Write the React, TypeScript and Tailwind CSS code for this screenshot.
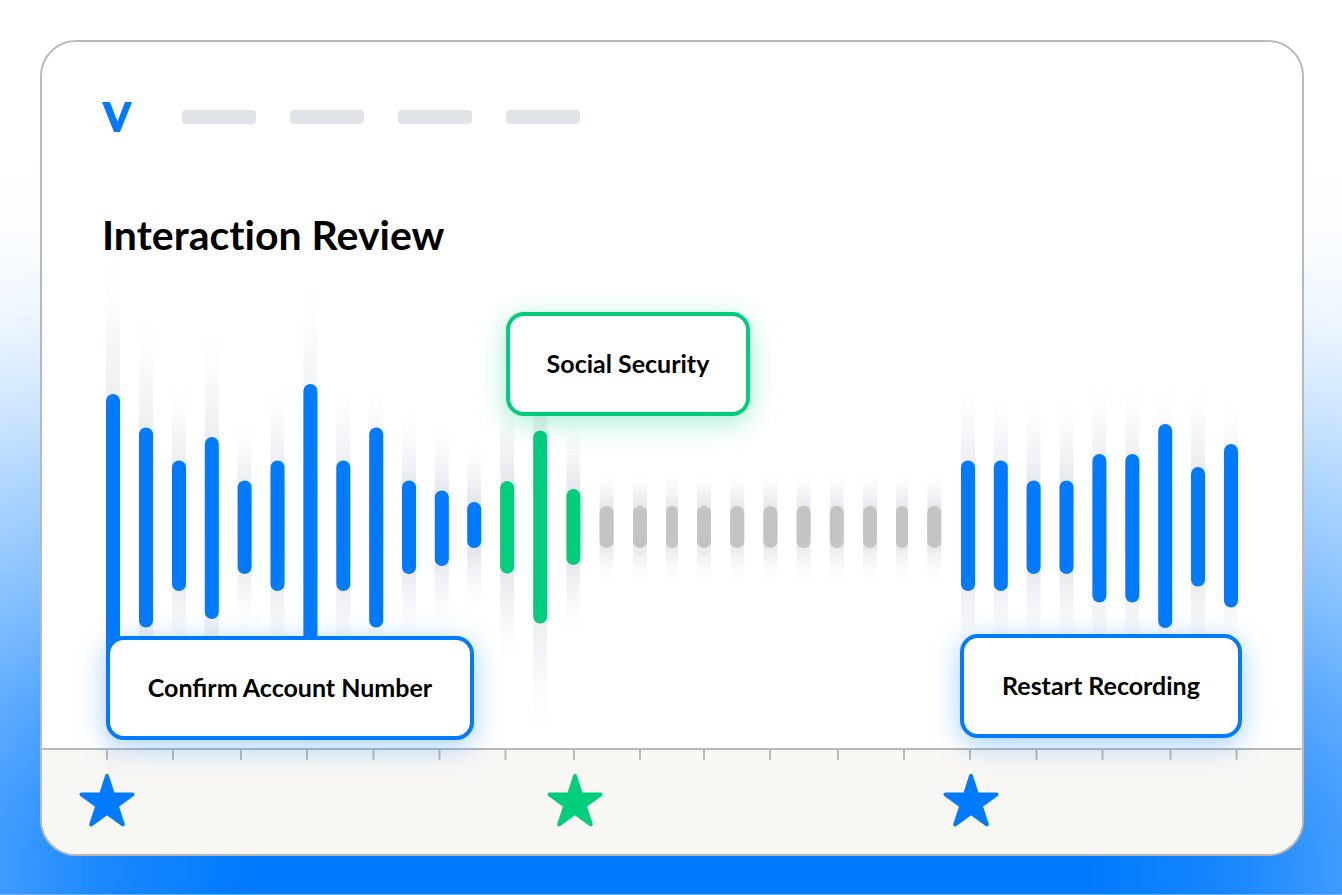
import React from "react";
import { clsx } from "clsx";

type Tone = "blue" | "green" | "gray";

interface Bar {
  x: number;
  top: number;
  bottom: number;
  tone: Tone;
  /** half the height of the faded column behind the bar */
  glow: number;
  width?: number;
}

interface Callout {
  label: string;
  x: number;
  y: number;
  tone: "blue" | "green";
  className: string;
}

const CHART_WIDTH = 1260;
const CHART_HEIGHT = 490;
const CHART_MIDDLE = 268;

const barFill: Record<Tone, string> = {
  blue: "fill-[#007aff]",
  green: "fill-[#00ce7c]",
  gray: "fill-[#c4c4c4]",
};

const bars: Bar[] = [
  { x: 64, top: 136, bottom: 410, tone: "blue", glow: 282 },
  { x: 97, top: 169.5, bottom: 369.5, tone: "blue", glow: 218 },
  { x: 130, top: 202.5, bottom: 333, tone: "blue", glow: 145 },
  { x: 162.8, top: 179, bottom: 361, tone: "blue", glow: 200 },
  { x: 195.6, top: 222.5, bottom: 316, tone: "blue", glow: 105 },
  { x: 228.5, top: 202.5, bottom: 333, tone: "blue", glow: 145 },
  { x: 261.4, top: 126, bottom: 410, tone: "blue", glow: 250 },
  { x: 294.3, top: 202.5, bottom: 333, tone: "blue", glow: 145 },
  { x: 327.2, top: 169.5, bottom: 369.5, tone: "blue", glow: 145 },
  { x: 360, top: 222.5, bottom: 316, tone: "blue", glow: 118 },
  { x: 392.8, top: 232.5, bottom: 308, tone: "blue", glow: 105 },
  { x: 425.2, top: 244, bottom: 290, tone: "blue", glow: 84 },
  { x: 458.2, top: 223, bottom: 315.5, tone: "green", glow: 140 },
  { x: 491.2, top: 172.5, bottom: 365.5, tone: "green", glow: 214 },
  { x: 524.4, top: 231, bottom: 307, tone: "green", glow: 112 },
  { x: 557.6, top: 248, bottom: 290, tone: "gray", glow: 57 },
  { x: 591, top: 248, bottom: 290, tone: "gray", glow: 57 },
  { x: 624, top: 248, bottom: 290, tone: "gray", glow: 57, width: 12 },
  { x: 655, top: 248, bottom: 290, tone: "gray", glow: 57 },
  { x: 688.2, top: 248, bottom: 290, tone: "gray", glow: 57 },
  { x: 721.4, top: 248, bottom: 290, tone: "gray", glow: 57 },
  { x: 754.6, top: 248, bottom: 290, tone: "gray", glow: 57 },
  { x: 787.8, top: 248, bottom: 290, tone: "gray", glow: 57 },
  { x: 821, top: 248, bottom: 290, tone: "gray", glow: 57 },
  { x: 854, top: 248, bottom: 290, tone: "gray", glow: 57, width: 12 },
  { x: 885.3, top: 248, bottom: 290, tone: "gray", glow: 57 },
  { x: 919, top: 202.5, bottom: 333, tone: "blue", glow: 145 },
  { x: 951.8, top: 202.5, bottom: 333, tone: "blue", glow: 135 },
  { x: 984.6, top: 222.5, bottom: 316, tone: "blue", glow: 130 },
  { x: 1017.5, top: 222.5, bottom: 316, tone: "blue", glow: 130 },
  { x: 1050.4, top: 196, bottom: 344.5, tone: "blue", glow: 145 },
  { x: 1083.3, top: 196, bottom: 344.5, tone: "blue", glow: 145 },
  { x: 1116.2, top: 166, bottom: 370, tone: "blue", glow: 145 },
  { x: 1149, top: 209, bottom: 328.5, tone: "blue", glow: 145 },
  { x: 1182, top: 186, bottom: 349.5, tone: "blue", glow: 125 },
];

const callouts: Callout[] = [
  { label: "Confirm Account Number", x: 64, y: 378, tone: "blue", className: "w-[368px]" },
  { label: "Social Security", x: 464, y: 54, tone: "green", className: "w-[244px]" },
  { label: "Restart Recording", x: 918, y: 376, tone: "blue", className: "w-[282px]" },
];

const ticks = [
  64, 130, 198, 264, 330.5, 396.5, 462.5, 531, 597, 661, 727, 795, 861, 927, 993.5, 1059.5, 1127.5,
  1193.5,
];

const markers: { x: number; tone: Tone }[] = [
  { x: 65, tone: "blue" },
  { x: 533, tone: "green" },
  { x: 929, tone: "blue" },
];

const Logo = () => (
  <svg viewBox="0 0 30 30" className="size-[30px] fill-[#007aff]" role="img" aria-label="Logo">
    <path d="M0 0h7.9l7.6 19.6L23 0h7L18 30h-6z" />
  </svg>
);

const Header = () => (
  <header className="flex items-center px-[60px]">
    <Logo />
    <div className="ml-[50px] flex gap-[34px]">
      {[0, 1, 2, 3].map((item) => (
        <span key={item} className="h-3.5 w-[74px] rounded bg-[#e0e4e9]" />
      ))}
    </div>
  </header>
);

const Waveform = () => (
  <svg
    viewBox={`0 0 ${CHART_WIDTH} ${CHART_HEIGHT}`}
    className="block w-full overflow-visible"
    aria-hidden="true"
  >
    <defs>
      <linearGradient id="glow" x1="0" y1="0" x2="0" y2="1">
        <stop offset="0" stopColor="#cfd3df" stopOpacity="0" />
        <stop offset="0.1" stopColor="#cfd3df" stopOpacity="0.06" />
        <stop offset="0.25" stopColor="#cfd3df" stopOpacity="0.32" />
        <stop offset="0.5" stopColor="#cfd3df" stopOpacity="0.95" />
        <stop offset="0.75" stopColor="#cfd3df" stopOpacity="0.32" />
        <stop offset="0.9" stopColor="#cfd3df" stopOpacity="0.06" />
        <stop offset="1" stopColor="#cfd3df" stopOpacity="0" />
      </linearGradient>
    </defs>
    {bars.map(({ x, top, bottom, tone, glow, width = 14 }) => (
      <g key={x}>
        <rect x={x} y={CHART_MIDDLE - glow} width={width} height={glow * 2} fill="url(#glow)" />
        <rect
          x={x}
          y={top}
          width={width}
          height={bottom - top}
          rx={width / 2}
          className={barFill[tone]}
        />
      </g>
    ))}
  </svg>
);

const CalloutBox = ({ label, x, y, tone, className }: Callout) => (
  <p
    className={clsx(
      "absolute flex h-[104px] items-center justify-center rounded-[18px] border-4 bg-white text-[25px] font-bold whitespace-nowrap",
      tone === "blue" && "border-[#007aff] shadow-[0_6px_28px_rgba(0,122,255,0.36)]",
      tone === "green" && "border-[#00ce7c] shadow-[0_6px_28px_rgba(0,206,124,0.36)]",
      className,
    )}
    style={{
      left: `${(x / CHART_WIDTH) * 100}%`,
      top: `${(y / CHART_HEIGHT) * 100}%`,
    }}
  >
    {label}
  </p>
);

const Timeline = () => (
  <footer className="border-t-2 border-[#b9b9b9] bg-[#f8f7f4]">
    <svg viewBox={`0 0 ${CHART_WIDTH} 104`} className="block w-full" aria-hidden="true">
      {ticks.map((x) => (
        <rect key={x} x={x} y="0" width="2" height="10" className="fill-[#b9b9b9]" />
      ))}
      {markers.map(({ x, tone }) => (
        <path
          key={x}
          transform={`translate(${x} 52.8)`}
          d="M0-26.8 6-8.3H25.5L9.7 3.2l6.1 18.5L0 10.2l-15.8 11.5L-9.7 3.2-25.5-8.3H-6z"
          strokeWidth="4"
          strokeLinejoin="round"
          className={clsx(
            barFill[tone],
            tone === "blue" && "stroke-[#007aff]",
            tone === "green" && "stroke-[#00ce7c]",
          )}
        />
      ))}
    </svg>
  </footer>
);

const App = () => {
  return (
    <main className="min-h-screen border-b border-[#66b0ff] bg-[linear-gradient(to_right,rgba(255,255,255,0.25),rgba(255,255,255,0.1)_8%,rgba(255,255,255,0)_19%,rgba(255,255,255,0)_81%,rgba(255,255,255,0.1)_92%,rgba(255,255,255,0.25)),linear-gradient(to_bottom,#fff_16%,#fafdff_26%,#ebf4ff_35%,#bfdeff_46%,#8fc5ff_56%,#61adff_67%,#2e92ff_78%,#0a7fff_89%,#007aff_95%)] pt-10 pr-[38px] pb-[38px] pl-10 font-['Lato',sans-serif] text-black">
      <div className="overflow-hidden rounded-[36px] border-2 border-[#b9b9b9] bg-white pt-[60px]">
        <Header />
        <h1 className="mt-20 px-[60px] text-[41px] leading-[46px] font-bold [font-variant-ligatures:none]">
          Interaction Review
        </h1>
        <section className="relative z-10">
          <Waveform />
          {callouts.map((callout) => (
            <CalloutBox key={callout.label} {...callout} />
          ))}
        </section>
        <Timeline />
      </div>
    </main>
  );
};

export default App;
